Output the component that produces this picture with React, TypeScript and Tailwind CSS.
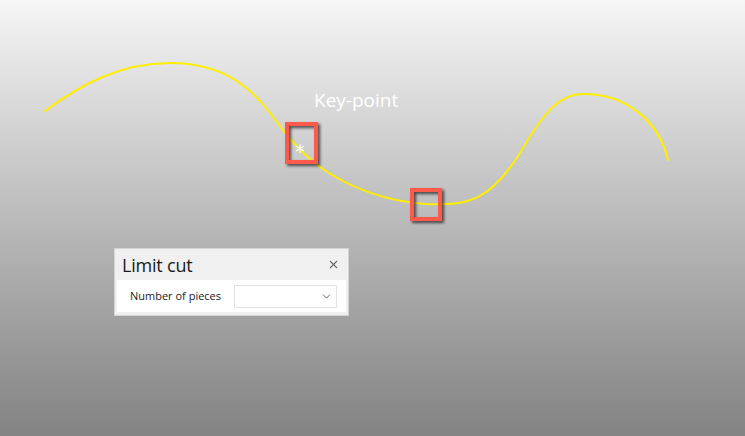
import { ChevronDown, X } from "lucide-react";

const CURVE =
  "M45,111 C80,85 120,63 170,63 C215,63 245,80 270,113 C290,140 300,152 320,167 C350,188 385,201 425,204 C470,206 490,200 520,153 C545,110 560,94 583,94 C630,94 660,125 668,160";

function Marker({ className }: { className: string }) {
  return (
    <div
      className={`absolute border-[4px] border-[#fd5a4b] drop-shadow-[2px_2px_1.5px_rgba(0,0,0,0.65)] ${className}`}
    />
  );
}

export default function App() {
  return (
    <div className="relative h-[436px] w-[745px] overflow-hidden bg-gradient-to-b from-[#f6f6f6] to-[#838383] font-['Open_Sans','Noto_Sans',sans-serif]">
      <svg className="absolute inset-0" width="745" height="436" viewBox="0 0 745 436" aria-hidden="true">
        <path d={CURVE} fill="none" stroke="#ffee00" strokeWidth="2" strokeLinecap="round" />
        <g stroke="#ffffff" strokeWidth="1.1">
          <line x1="300" y1="144" x2="300" y2="153" />
          <line x1="296" y1="146" x2="304" y2="151" />
          <line x1="296" y1="151" x2="304" y2="146" />
        </g>
      </svg>

      <span className="absolute left-[314px] top-[88px] text-[19px] leading-[24px] text-white">Key-point</span>

      <Marker className="left-[285px] top-[122px] h-[42px] w-[33px]" />
      <Marker className="left-[410px] top-[188px] h-[33px] w-[32px]" />

      <div className="absolute left-[114px] top-[248px] w-[235px] border border-[#d4d4d4] bg-[#f0f0f0] px-[2px] pb-[3px]">
        <div className="flex h-[31px] items-center justify-between pl-[5px] pr-[6px]">
          <span className="text-[18px] leading-none tracking-[-0.2px] text-[#1a1a1a]">Limit cut</span>
          <X className="h-[13px] w-[13px] text-[#666]" strokeWidth={2} />
        </div>
        <div className="flex h-[32px] items-center bg-white pl-[13px] pr-[9px]">
          <span className="w-[104px] text-[11px] text-[#222]">Number of pieces</span>
          <div className="flex h-[23px] flex-1 items-center justify-end border border-[#e3e3e3] pr-[3px]">
            <ChevronDown className="h-[13px] w-[13px] text-[#444]" strokeWidth={1.5} />
          </div>
        </div>
      </div>
    </div>
  );
}
